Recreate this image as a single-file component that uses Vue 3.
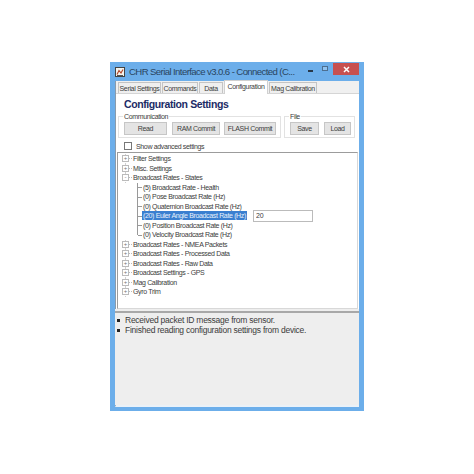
<script setup>
const tabs = [
  { name: "Serial Settings", width: 43 },
  { name: "Commands", width: 36 },
  { name: "Data", width: 24 },
  { name: "Configuration", width: 44, active: true },
  { name: "Mag Calibration", width: 48 },
];

const before = ["Filter Settings", "Misc. Settings"];
const rates = [
  { text: "(5) Broadcast Rate - Health" },
  { text: "(0) Pose Broadcast Rate (Hz)" },
  { text: "(0) Quaternion Broadcast Rate (Hz)" },
  { text: "(20) Euler Angle Broadcast Rate (Hz)", selected: true },
  { text: "(0) Position Broadcast Rate (Hz)" },
  { text: "(0) Velocity Broadcast Rate (Hz)" },
];
const after = [
  "Broadcast Rates - NMEA Packets",
  "Broadcast Rates - Processed Data",
  "Broadcast Rates - Raw Data",
  "Broadcast Settings - GPS",
  "Mag Calibration",
  "Gyro Trim",
];
const log = [
  "Received packet ID message from sensor.",
  "Finished reading configuration settings from device.",
];
</script>

<template>
  <div class="page">
    <div class="window">
      <!-- Title bar -->
      <div class="titlebar">
        <svg class="app-icon" width="10" height="10" viewBox="0 0 10 10">
          <rect x="0.5" y="0.5" width="9" height="9" fill="#f4f4ee" stroke="#444" />
          <path d="M2 7.5 L4 3.5 L6 6 L8 2.5" fill="none" stroke="#b5482c" stroke-width="1.2" />
          <path d="M2 8.5 H8" stroke="#555" />
        </svg>
        <span class="title">CHR Serial Interface v3.0.6 - Connected (C...</span>
        <span class="min"></span>
        <span class="max"></span>
        <span class="close">
          <svg width="7" height="7" viewBox="0 0 7 7">
            <path d="M1 1 L6 6 M6 1 L1 6" stroke="#fff" stroke-width="1.5" />
          </svg>
        </span>
      </div>

      <div class="body">
        <!-- Tabs -->
        <div class="tabs">
          <div
            v-for="tab in tabs"
            :key="tab.name"
            class="tab"
            :class="{ active: tab.active }"
            :style="{ width: tab.width + 'px' }"
          >
            {{ tab.name }}
          </div>
        </div>

        <div class="panel">
          <h1 class="heading">Configuration Settings</h1>

          <div class="groups">
            <fieldset class="group comm">
              <legend>Communication</legend>
              <button type="button" class="btn read">Read</button>
              <button type="button" class="btn ram">RAM Commit</button>
              <button type="button" class="btn flash">FLASH Commit</button>
            </fieldset>
            <fieldset class="group file">
              <legend>File</legend>
              <button type="button" class="btn save">Save</button>
              <button type="button" class="btn load">Load</button>
            </fieldset>
          </div>

          <label class="advanced">
            <span class="check"></span>
            Show advanced settings
          </label>

          <!-- Settings tree -->
          <div class="tree">
            <div v-for="item in before" :key="item" class="row top">
              <span class="box">+</span><span class="dash"></span>
              <span class="label">{{ item }}</span>
            </div>
            <div class="row top">
              <span class="box">-</span><span class="dash"></span>
              <span class="label">Broadcast Rates - States</span>
            </div>
            <div
              v-for="(rate, i) in rates"
              :key="rate.text"
              class="row child"
              :class="{ last: i === rates.length - 1 }"
            >
              <span class="branch"></span>
              <span class="label" :class="{ selected: rate.selected }">{{ rate.text }}</span>
              <input v-if="rate.selected" class="edit" value="20" />
            </div>
            <div v-for="item in after" :key="item" class="row top">
              <span class="box">+</span><span class="dash"></span>
              <span class="label">{{ item }}</span>
            </div>
          </div>

          <!-- Status log -->
          <ul class="log">
            <li v-for="line in log" :key="line">{{ line }}</li>
          </ul>
        </div>
      </div>
    </div>
  </div>
</template>

<style>
html,
body {
  margin: 0;
  background: #fff;
}
</style>

<style scoped>
.page {
  width: 474px;
  height: 474px;
  padding: 62px 0 0 110px;
  box-sizing: border-box;
  font-family: "Liberation Sans", Arial, sans-serif;
  overflow: hidden;
}

.window {
  width: 254px;
  height: 349px;
  box-sizing: border-box;
  background: #6caeea;
  padding: 0 5px 4px 5px;
  display: flex;
  flex-direction: column;
}

/* Title bar */
.titlebar {
  height: 19px;
  flex-shrink: 0;
  display: flex;
  align-items: center;
  position: relative;
}

.app-icon {
  margin: 1px 4px 0 0;
}

.title {
  font-size: 9.6px;
  letter-spacing: -0.6px;
  color: #2a4560;
  white-space: nowrap;
}

.min {
  position: absolute;
  right: 46px;
  top: 8px;
  width: 5px;
  height: 2px;
  background: #27384a;
}

.max {
  position: absolute;
  right: 31px;
  top: 4px;
  width: 4px;
  height: 3px;
  border: 1px solid #4d6f90;
  background: #8fc3f1;
}

.close {
  position: absolute;
  right: 0;
  top: 1px;
  width: 26px;
  height: 12px;
  background: #c75050;
  display: flex;
  align-items: center;
  justify-content: center;
}

.body {
  flex: 1;
  min-height: 0;
  display: flex;
  flex-direction: column;
  background: #f0f0f0;
  border: 1px solid #8a9bab;
  border-width: 0 0 2px 1px;
  border-bottom-color: #eaf1f8;
}

/* Tabs */
.tabs {
  display: flex;
  gap: 1px;
  height: 12px;
  flex-shrink: 0;
  padding: 0 0 0 2px;
  background: #f0f0f0;
  border-bottom: 1px solid #d5d5d5;
  position: relative;
}

.tab {
  font-size: 7px;
  letter-spacing: -0.35px;
  color: #3c3c3c;
  line-height: 11px;
  margin-top: 1px;
  border: 1px solid #c4c4c4;
  border-bottom: 0;
  background: #efefef;
  white-space: nowrap;
  text-align: center;
  box-sizing: border-box;
  flex-shrink: 0;
}

.tab.active {
  background: #fff;
  margin-top: -1px;
  height: 14px;
  line-height: 12px;
  z-index: 1;
  border-color: #d0d0d0;
}

.panel {
  flex: 1;
  min-height: 0;
  background: #fff;
  display: flex;
  flex-direction: column;
  padding-top: 2px;
}

.heading {
  margin: 0 0 0 8px;
  font-size: 10.5px;
  letter-spacing: -0.4px;
  line-height: 16px;
  font-weight: bold;
  color: #1c2b66;
}

.groups {
  display: flex;
  gap: 3px;
  margin: 0 0 0 2px;
}

.group {
  margin: 0;
  padding: 2px 3px 4px 5px;
  border: 1px solid #e2e2e2;
  height: 26px;
  box-sizing: border-box;
  display: flex;
  align-items: center;
  position: relative;
}

.group legend {
  font-size: 7px;
  letter-spacing: -0.35px;
  color: #3c3c3c;
  padding: 0 1px;
  line-height: 9px;
  margin-left: -1px;
}

.comm {
  width: 163px;
}

.file {
  width: 69px;
}

.btn {
  font: 7px "Liberation Sans", Arial, sans-serif;
  letter-spacing: -0.35px;
  color: #3c3c3c;
  background: #e4e4e4;
  border: 1px solid #c6c6c6;
  height: 13px;
  padding: 0;
  white-space: nowrap;
  flex-shrink: 0;
}

.read {
  width: 43px;
  margin-right: 5px;
}

.ram {
  width: 48px;
  margin-right: 4px;
}

.flash {
  width: 52px;
}

.save {
  width: 29px;
  margin-right: 5px;
}

.load {
  width: 27px;
}

.advanced {
  display: flex;
  align-items: center;
  gap: 4px;
  font-size: 7px;
  letter-spacing: -0.35px;
  color: #3c3c3c;
  height: 12px;
  margin: 2px 0 0 8px;
}

.check {
  width: 6px;
  height: 6px;
  border: 1px solid #777;
  background: #fff;
}

/* Tree */
.tree {
  margin: 0 0 0 1px;
  width: 241px;
  height: 157px;
  box-sizing: border-box;
  flex-shrink: 0;
  border: 1px solid #9c9c9c;
  border-right-color: #d8d8d8;
  border-bottom-color: #d8d8d8;
  padding: 1px 0 0 4px;
  background: #fff;
}

.row {
  height: 9.5px;
  display: flex;
  align-items: center;
  font-size: 7px;
  letter-spacing: -0.35px;
  color: #3c3c3c;
  white-space: nowrap;
  position: relative;
}

.top::before {
  content: "";
  position: absolute;
  left: 3px;
  top: 0;
  bottom: 0;
  border-left: 1px dotted #d0d0d0;
}

.box {
  width: 5px;
  height: 5px;
  border: 1px solid #bbb;
  font-size: 6px;
  letter-spacing: 0;
  line-height: 5px;
  text-align: center;
  color: #777;
  background: #fff;
  flex-shrink: 0;
  overflow: hidden;
  position: relative;
}

.dash {
  width: 3px;
  border-top: 1px dotted #bbb;
}

.label {
  line-height: 9px;
  padding: 0 1px;
}

.child {
  padding-left: 15px;
}

.branch {
  width: 4px;
  height: 100%;
  border-left: 1px solid #999;
  position: relative;
  flex-shrink: 0;
}

.branch::after {
  content: "";
  position: absolute;
  left: 0;
  top: 50%;
  width: 4px;
  border-top: 1px solid #999;
}

.last .branch {
  height: 50%;
  align-self: flex-start;
}

.last .branch::after {
  top: 100%;
}

.selected {
  background: #3a7fd0;
  color: #e8f1fb;
}

.edit {
  margin-left: 6px;
  width: 60px;
  height: 12px;
  box-sizing: border-box;
  border: 1px solid #bbb;
  font: 7px "Liberation Sans", Arial, sans-serif;
  color: #3c3c3c;
  padding: 0 1px 0 2px;
  outline: none;
}

/* Log */
.log {
  flex: 1;
  margin: 0 0 0 -1px;
  padding: 6px 0 0 10px;
  list-style: none;
  background: linear-gradient(#eeeeee 0 2px, #a8a8a8 2px 4px, #eeeeee 4px);
  font-size: 8.5px;
  letter-spacing: -0.25px;
  line-height: 10px;
  color: #3c3c3c;
}

.log li {
  position: relative;
}

.log li::before {
  content: "";
  position: absolute;
  left: -8px;
  top: 4px;
  width: 3px;
  height: 3px;
  background: #222;
}
</style>
